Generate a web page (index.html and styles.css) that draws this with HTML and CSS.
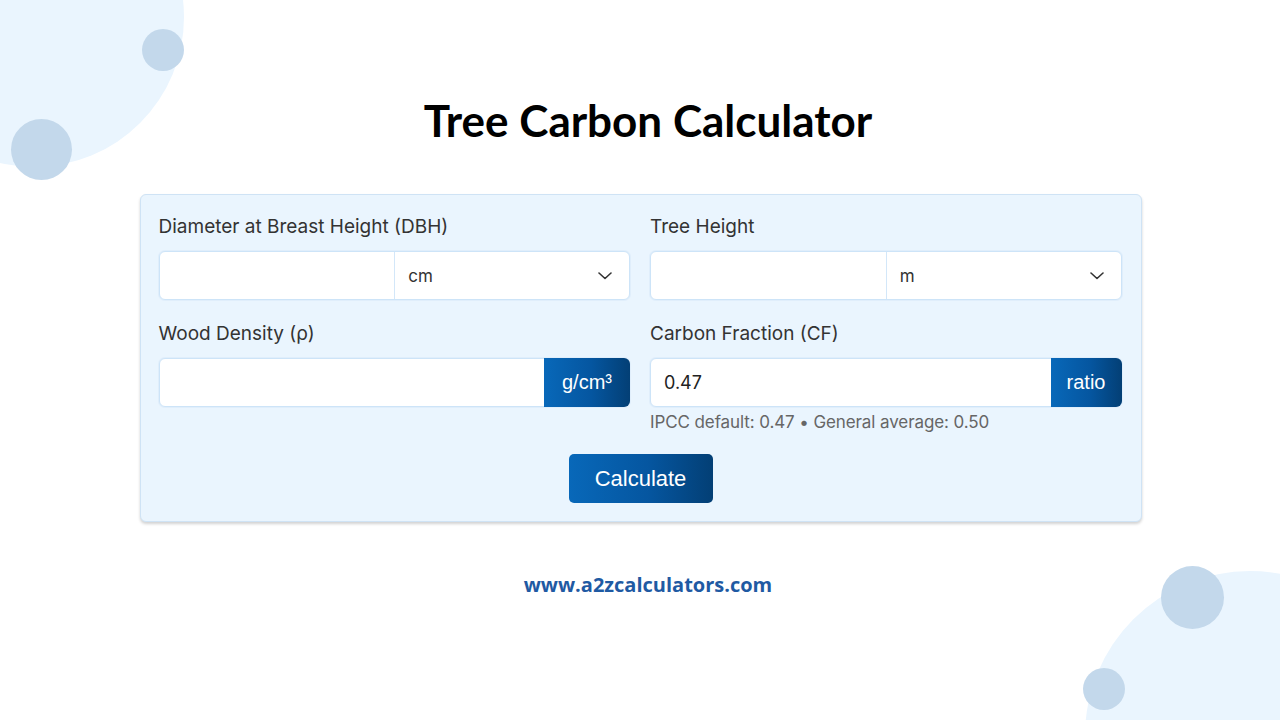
FILE: index.html
```html
<!DOCTYPE html>
<html lang="en">
<head>
<meta charset="utf-8">
<title>Tree Carbon Calculator</title>
<link rel="stylesheet" href="styles.css">
</head>
<body>
<div class="decor" aria-hidden="true">
  <div class="blob blob-tl"></div>
  <div class="blob blob-br"></div>
  <div class="dot dot-1"></div>
  <div class="dot dot-2"></div>
  <div class="dot dot-3"></div>
  <div class="dot dot-4"></div>
</div>
<main class="page">
  <h1 class="title">Tree Carbon Calculator</h1>
  <section class="card">
    <div class="grid">
      <div class="field">
        <label class="label">Diameter at Breast Height (DBH)</label>
        <div class="group">
          <input class="input half" type="text">
          <div class="select">
            <span>cm</span>
            <svg class="chev" width="14" height="8" viewBox="0 0 14 8"><path d="M1 1l6 5.5L13 1" fill="none" stroke="#333" stroke-width="1.6" stroke-linecap="round" stroke-linejoin="round"/></svg>
          </div>
        </div>
      </div>
      <div class="field">
        <label class="label">Tree Height</label>
        <div class="group">
          <input class="input half" type="text">
          <div class="select">
            <span>m</span>
            <svg class="chev" width="14" height="8" viewBox="0 0 14 8"><path d="M1 1l6 5.5L13 1" fill="none" stroke="#333" stroke-width="1.6" stroke-linecap="round" stroke-linejoin="round"/></svg>
          </div>
        </div>
      </div>
      <div class="field">
        <label class="label">Wood Density (ρ)</label>
        <div class="group">
          <input class="input grow" type="text">
          <span class="addon addon-wide">g/cm³</span>
        </div>
      </div>
      <div class="field">
        <label class="label">Carbon Fraction (CF)</label>
        <div class="group">
          <input class="input grow" type="text" value="0.47">
          <span class="addon">ratio</span>
        </div>
        <p class="hint">IPCC default: 0.47 • General average: 0.50</p>
      </div>
    </div>
    <div class="actions">
      <button class="btn" type="button">Calculate</button>
    </div>
  </section>
  <p class="site">www.a2zcalculators.com</p>
</main>
</body>
</html>
```
FILE: styles.css
```css
* { box-sizing: border-box; }
html, body {
  margin: 0;
  width: 1280px;
  height: 720px;
  overflow: hidden;
  background: #ffffff;
}
body {
  position: relative;
  font-family: "Inter", "Liberation Sans", sans-serif;
}
.decor {
  position: absolute;
  inset: 0;
  z-index: 0;
  overflow: hidden;
}
.blob, .dot {
  position: absolute;
  border-radius: 50%;
}
.blob { background: #eaf5fe; }
.dot { background: #c3d8eb; }
.blob-tl { width: 300px; height: 300px; left: -116px; top: -133px; }
.blob-br { width: 330px; height: 330px; left: 1085px; top: 571px; }
.dot-1 { width: 42px; height: 42px; left: 142px; top: 29px; }
.dot-2 { width: 61px; height: 61px; left: 11px; top: 119px; }
.dot-3 { width: 63px; height: 63px; left: 1161px; top: 566px; }
.dot-4 { width: 42px; height: 42px; left: 1083px; top: 668px; }

.page {
  position: relative;
  z-index: 1;
  display: flex;
  flex-direction: column;
  align-items: center;
  padding-top: 96px;
}
.title {
  margin: 0;
  font-family: "Lato", "Open Sans", sans-serif;
  font-weight: 700;
  font-size: 44px;
  line-height: 48px;
  color: #000;
  margin-left: 16px;
}
.card {
  margin-top: 50px;
  width: 1002px;
  margin-left: 1px;
  background: #eaf5fe;
  border: 1px solid #cfe3f5;
  border-radius: 6px;
  box-shadow: 0 2px 3px rgba(0, 0, 0, 0.18);
  padding: 21px 19px 18px 18px;
}
.grid {
  display: grid;
  grid-template-columns: 1fr 1fr;
  column-gap: 20px;
  row-gap: 23px;
}
.field { display: flex; flex-direction: column; }
.label {
  font-size: 19px;
  line-height: 22px;
  color: #333;
  margin-bottom: 13px;
}
.group {
  display: flex;
  height: 49px;
  background: #fff;
  border: 1px solid #cde4f8;
  border-radius: 6px;
  box-shadow: 0 0 0 1px #e0eefb;
}
.input {
  border: 0;
  outline: none;
  background: transparent;
  font-family: "Inter", "Liberation Sans", sans-serif;
  font-size: 18px;
  color: #222;
  padding: 0 13px;
  min-width: 0;
  border-radius: 6px 0 0 6px;
}
.half { width: 50%; }
.grow { flex: 1; }
.select {
  flex: 1;
  display: flex;
  align-items: center;
  justify-content: space-between;
  border-left: 1.5px solid #d3e7f9;
  padding: 0 17px 0 13px;
  font-size: 17px;
  color: #333;
}
.chev { display: block; }
.addon {
  display: flex;
  align-items: center;
  justify-content: center;
  margin: -1px -1px -1px 0;
  width: 71px;
  background: linear-gradient(90deg, #0868b9 0%, #0556a0 55%, #033f75 100%);
  color: #fff;
  font-family: "Liberation Sans", "Inter", sans-serif;
  font-size: 20px;
  border-radius: 0 6px 6px 0;
}
.addon-wide { width: 86px; }
.hint {
  margin: 5px 0 0;
  font-size: 17px;
  line-height: 20px;
  color: #666;
  letter-spacing: -0.1px;
}
.actions {
  display: flex;
  justify-content: center;
  margin-top: 22px;
}
.btn {
  width: 144px;
  height: 49px;
  border: 0;
  border-radius: 5px;
  background: linear-gradient(90deg, #0868b9 0%, #0556a0 55%, #033f75 100%);
  color: #fff;
  font-family: "Liberation Sans", "Inter", sans-serif;
  font-size: 22px;
  padding: 0;
  margin-left: 1px;
}
.site {
  margin: 49px 0 0;
  font-family: "Open Sans", "Liberation Sans", sans-serif;
  font-weight: 700;
  font-size: 20px;
  line-height: 28px;
  color: #1f5aa3;
  margin-left: 16px;
}
```
